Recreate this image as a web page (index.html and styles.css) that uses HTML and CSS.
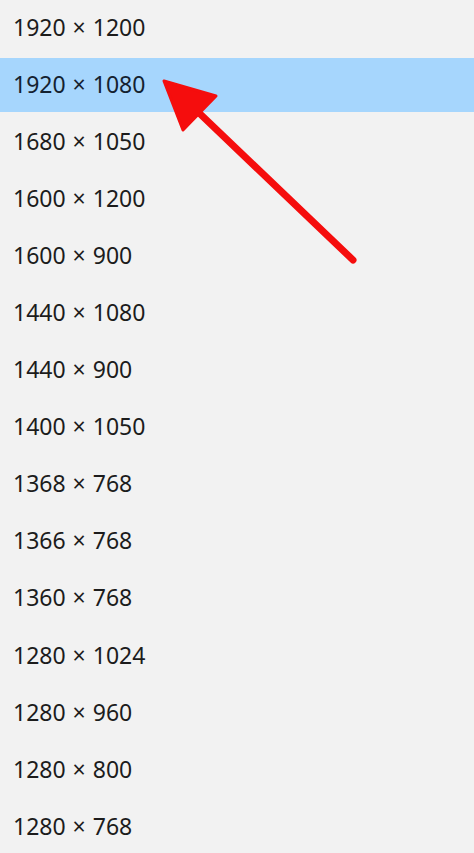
FILE: index.html
```html
<!DOCTYPE html>
<html>
<head>
<meta charset="utf-8">
<link rel="stylesheet" href="styles.css">
</head>
<body>
<div class="list">
  <div class="item">1920 × 1200</div>
  <div class="item selected">1920 × 1080</div>
  <div class="item">1680 × 1050</div>
  <div class="item">1600 × 1200</div>
  <div class="item">1600 × 900</div>
  <div class="item">1440 × 1080</div>
  <div class="item">1440 × 900</div>
  <div class="item">1400 × 1050</div>
  <div class="item">1368 × 768</div>
  <div class="item">1366 × 768</div>
  <div class="item">1360 × 768</div>
  <div class="item">1280 × 1024</div>
  <div class="item">1280 × 960</div>
  <div class="item">1280 × 800</div>
  <div class="item">1280 × 768</div>
</div>
<svg class="arrow" width="474" height="853" viewBox="0 0 474 853">
  <line x1="353" y1="260" x2="196" y2="110" stroke="#f50d0d" stroke-width="7" stroke-linecap="round"/>
  <polygon points="164,81 216,96 183,130" fill="#f50d0d" stroke="#f50d0d" stroke-width="3" stroke-linejoin="round"/>
</svg>
</body>
</html>
```
FILE: styles.css
```css
html, body {
  margin: 0;
  padding: 0;
  background: #f2f2f2;
  width: 474px;
  height: 853px;
  overflow: hidden;
}
.list {
  display: flex;
  flex-direction: column;
  gap: 3.1px;
  padding-top: 0.5px;
}
.item {
  height: 54px;
  flex: none;
  display: flex;
  align-items: center;
  padding-left: 13px;
  padding-bottom: 2px;
  font-family: "Noto Sans", "Open Sans", sans-serif;
  font-size: 23px;
  word-spacing: 1px;
  color: #1c1c1c;
  box-sizing: border-box;
}
.item.selected {
  background: #a6d6fd;
  color: #142230;
}
.arrow {
  position: absolute;
  left: 0;
  top: 0;
}
```
